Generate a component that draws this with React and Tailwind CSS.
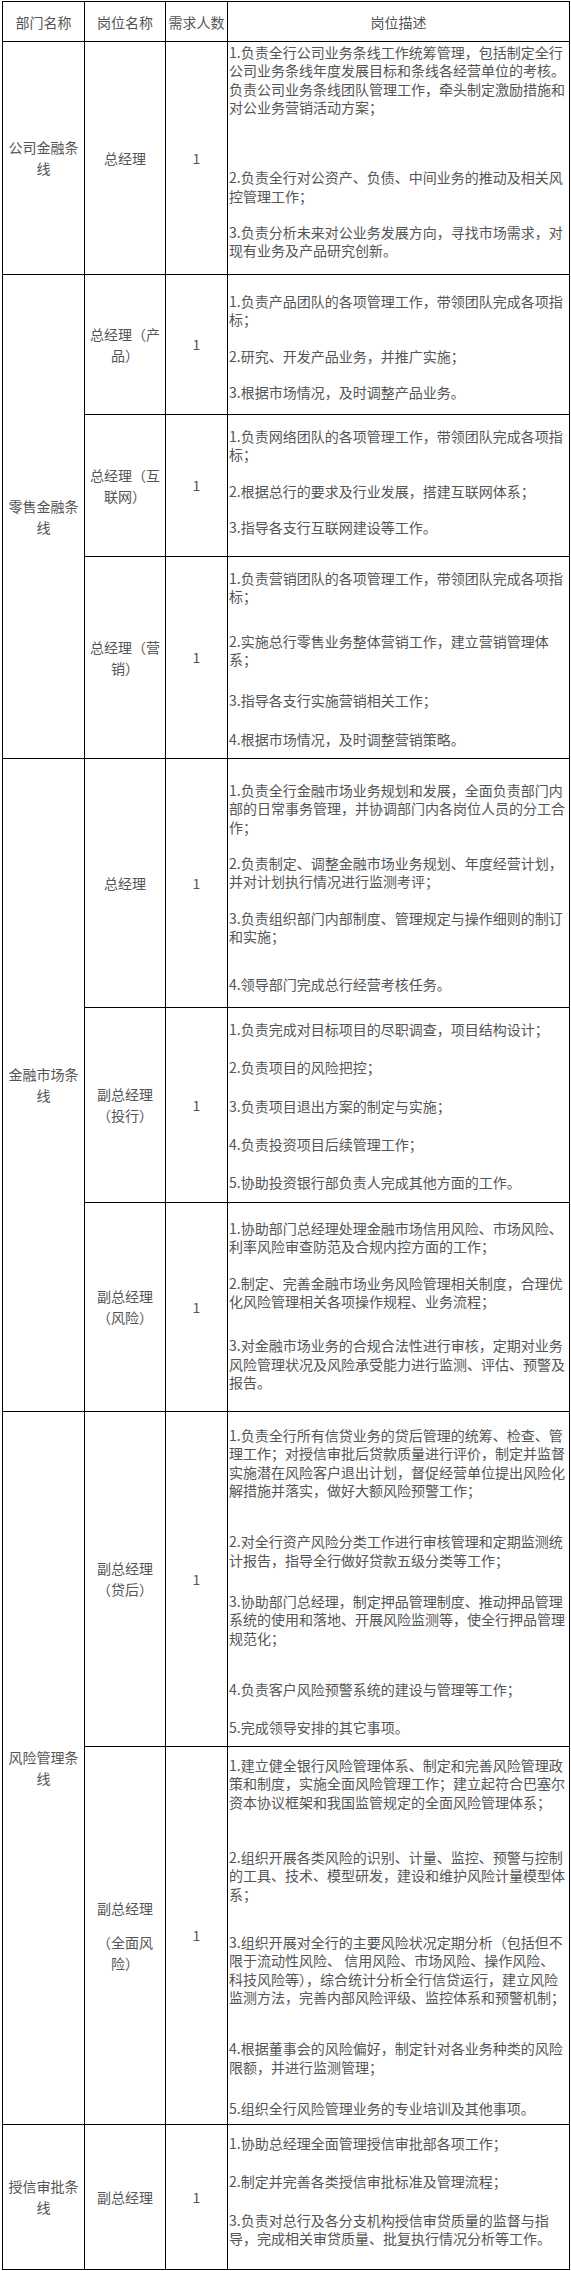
const groups = [
  {
    dept: "公司金融条线",
    rows: [
      {
        pos: ["总经理"],
        h: "h-[233px]",
        pt: "pt-[1px]",
        paras: [
          { t: "1.负责全行公司业务条线工作统筹管理，包括制定全行公司业务条线年度发展目标和条线各经营单位的考核。负责公司业务条线团队管理工作，牵头制定激励措施和对公业务营销活动方案；", mt: "" },
          { t: "2.负责全行对公资产、负债、中间业务的推动及相关风控管理工作；", mt: "mt-[52px]" },
          { t: "3.负责分析未来对公业务发展方向，寻找市场需求，对现有业务及产品研究创新。", mt: "mt-[18px]" },
        ],
      },
    ],
  },
  {
    dept: "零售金融条线",
    rows: [
      {
        pos: ["总经理（产品）"],
        h: "h-[140px]",
        pt: "pt-[17px]",
        paras: [
          { t: "1.负责产品团队的各项管理工作，带领团队完成各项指标；", mt: "" },
          { t: "2.研究、开发产品业务，并推广实施；", mt: "mt-[18px]" },
          { t: "3.根据市场情况，及时调整产品业务。", mt: "mt-[18px]" },
        ],
      },
      {
        pos: ["总经理（互联网）"],
        h: "h-[142px]",
        pt: "pt-[12px]",
        paras: [
          { t: "1.负责网络团队的各项管理工作，带领团队完成各项指标；", mt: "" },
          { t: "2.根据总行的要求及行业发展，搭建互联网体系；", mt: "mt-[18px]" },
          { t: "3.指导各支行互联网建设等工作。", mt: "mt-[18px]" },
        ],
      },
      {
        pos: ["总经理（营销）"],
        h: "h-[202px]",
        pt: "pt-[12px]",
        paras: [
          { t: "1.负责营销团队的各项管理工作，带领团队完成各项指标；", mt: "" },
          { t: "2.实施总行零售业务整体营销工作，建立营销管理体系；", mt: "mt-[26px]" },
          { t: "3.指导各支行实施营销相关工作；", mt: "mt-[23px]" },
          { t: "4.根据市场情况，及时调整营销策略。", mt: "mt-[20px]" },
        ],
      },
    ],
  },
  {
    dept: "金融市场条线",
    rows: [
      {
        pos: ["总经理"],
        h: "h-[249px]",
        pt: "pt-[22px]",
        paras: [
          { t: "1.负责全行金融市场业务规划和发展，全面负责部门内部的日常事务管理，并协调部门内各岗位人员的分工合作；", mt: "" },
          { t: "2.负责制定、调整金融市场业务规划、年度经营计划，并对计划执行情况进行监测考评；", mt: "mt-[18px]" },
          { t: "3.负责组织部门内部制度、管理规定与操作细则的制订和实施；", mt: "mt-[18px]" },
          { t: "4.领导部门完成总行经营考核任务。", mt: "mt-[30px]" },
        ],
      },
      {
        pos: ["副总经理（投行）"],
        h: "h-[195px]",
        pt: "pt-[12px]",
        paras: [
          { t: "1.负责完成对目标项目的尽职调查，项目结构设计；", mt: "" },
          { t: "2.负责项目的风险把控；", mt: "mt-[20px]" },
          { t: "3.负责项目退出方案的制定与实施；", mt: "mt-[20px]" },
          { t: "4.负责投资项目后续管理工作；", mt: "mt-[20px]" },
          { t: "5.协助投资银行部负责人完成其他方面的工作。", mt: "mt-[20px]" },
        ],
      },
      {
        pos: ["副总经理（风险）"],
        h: "h-[209px]",
        pt: "pt-[16px]",
        paras: [
          { t: "1.协助部门总经理处理金融市场信用风险、市场风险、利率风险审查防范及合规内控方面的工作；", mt: "" },
          { t: "2.制定、完善金融市场业务风险管理相关制度，合理优化风险管理相关各项操作规程、业务流程；", mt: "mt-[18px]" },
          { t: "3.对金融市场业务的合规合法性进行审核，定期对业务风险管理状况及风险承受能力进行监测、评估、预警及报告。", mt: "mt-[26px]" },
        ],
      },
    ],
  },
  {
    dept: "风险管理条线",
    rows: [
      {
        pos: ["副总经理（贷后）"],
        h: "h-[335px]",
        pt: "pt-[14px]",
        paras: [
          { t: "1.负责全行所有信贷业务的贷后管理的统筹、检查、管理工作；对授信审批后贷款质量进行评价，制定并监督实施潜在风险客户退出计划，督促经营单位提出风险化解措施并落实，做好大额风险预警工作；", mt: "" },
          { t: "2.对全行资产风险分类工作进行审核管理和定期监测统计报告，指导全行做好贷款五级分类等工作；", mt: "mt-[33px]" },
          { t: "3.协助部门总经理，制定押品管理制度、推动押品管理系统的使用和落地、开展风险监测等，使全行押品管理规范化；", mt: "mt-[23px]" },
          { t: "4.负责客户风险预警系统的建设与管理等工作；", mt: "mt-[33px]" },
          { t: "5.完成领导安排的其它事项。", mt: "mt-[20px]" },
        ],
      },
      {
        pos: ["副总经理", "（全面风险）"],
        h: "h-[378px]",
        pt: "pt-[9px]",
        paras: [
          { t: "1.建立健全银行风险管理体系、制定和完善风险管理政策和制度，实施全面风险管理工作；建立起符合巴塞尔资本协议框架和我国监管规定的全面风险管理体系；", mt: "" },
          { t: "2.组织开展各类风险的识别、计量、监控、预警与控制的工具、技术、模型研发，建设和维护风险计量模型体系；", mt: "mt-[37px]" },
          { t: "3.组织开展对全行的主要风险状况定期分析（包括但不限于流动性风险、 信用风险、市场风险、操作风险、科技风险等），综合统计分析全行信贷运行，建立风险监测方法，完善内部风险评级、监控体系和预警机制；", mt: "mt-[30px]" },
          { t: "4.根据董事会的风险偏好，制定针对各业务种类的风险限额，并进行监测管理；", mt: "mt-[33px]" },
          { t: "5.组织全行风险管理业务的专业培训及其他事项。", mt: "mt-[23px]" },
        ],
      },
    ],
  },
  {
    dept: "授信审批条线",
    rows: [
      {
        pos: ["副总经理"],
        h: "h-[145px]",
        pt: "pt-[9px]",
        paras: [
          { t: "1.协助总经理全面管理授信审批部各项工作；", mt: "" },
          { t: "2.制定并完善各类授信审批标准及管理流程；", mt: "mt-[20px]" },
          { t: "3.负责对总行及各分支机构授信审贷质量的监督与指导，完成相关审贷质量、批复执行情况分析等工作。", mt: "mt-[20px]" },
        ],
      },
    ],
  },
];

const cell = "border border-black";

export default function App() {
  return (
    <div className="min-h-screen bg-white pt-[1px] text-[14px] text-[#555] font-['Noto_Sans_CJK_SC','Noto_Sans',sans-serif]">
      <table className="ml-[2px] w-[567px] table-fixed border-collapse">
        <colgroup>
          <col className="w-[82px]" />
          <col className="w-[81px]" />
          <col className="w-[62px]" />
          <col className="w-[342px]" />
        </colgroup>
        <thead>
          <tr className="h-[40px]">
            <th className={`${cell} font-normal leading-[20px]`}>部门名称</th>
            <th className={`${cell} font-normal leading-[20px]`}>岗位名称</th>
            <th className={`${cell} font-normal leading-[20px]`}>需求人数</th>
            <th className={`${cell} font-normal leading-[20px]`}>岗位描述</th>
          </tr>
        </thead>
        <tbody>
          {groups.map((g) =>
            g.rows.map((r, i) => (
              <tr key={g.dept + i} className={r.h}>
                {i === 0 && (
                  <td rowSpan={g.rows.length} className={`${cell} px-[2px] text-center align-middle leading-[21px]`}>
                    {g.dept}
                  </td>
                )}
                <td className={`${cell} px-[2px] text-center align-middle leading-[21px]`}>
                  {r.pos.map((p, k) => (
                    <div key={k} className={k > 0 ? "mt-[13px]" : ""}>
                      {p}
                    </div>
                  ))}
                </td>
                <td className={`${cell} text-center align-middle`}>1</td>
                <td className={`${cell} ${r.pt} pl-[1px] pr-[3px] align-top leading-[18.33px]`}>
                  {r.paras.map((p, k) => (
                    <p key={k} className={p.mt}>
                      {p.t}
                    </p>
                  ))}
                </td>
              </tr>
            ))
          )}
        </tbody>
      </table>
    </div>
  );
}
